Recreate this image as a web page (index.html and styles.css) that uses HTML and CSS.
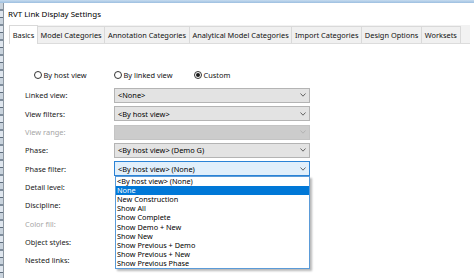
FILE: index.html
```html
<!DOCTYPE html>
<html>
<head>
<meta charset="utf-8">
<link rel="stylesheet" href="styles.css">
</head>
<body>
<div class="screen">
  <div class="topband"></div>
  <div class="main">
    <div class="side"></div>
    <div class="dialog">
      <div class="titlebar">RVT Link Display Settings</div>
      <div class="tabstrip">
        <div class="tab active">Basics</div>
        <div class="tab">Model Categories</div>
        <div class="tab">Annotation Categories</div>
        <div class="tab">Analytical Model Categories</div>
        <div class="tab">Import Categories</div>
        <div class="tab">Design Options</div>
        <div class="tab">Worksets</div>
      </div>
      <div class="content">
        <div class="radios">
          <div class="radio"><span class="circle"></span><span>By host view</span></div>
          <div class="radio"><span class="circle"></span><span>By linked view</span></div>
          <div class="radio"><span class="circle checked"></span><span>Custom</span></div>
        </div>
        <div class="form">
          <div class="label">Linked view:</div>
          <div class="cell"><div class="combo"><span>&lt;None&gt;</span><svg class="chev" width="6" height="4" viewBox="0 0 6 4"><polyline points="0.5,0.5 3,3.2 5.5,0.5"/></svg></div></div>

          <div class="label">View filters:</div>
          <div class="cell"><div class="combo"><span>&lt;By host view&gt;</span><svg class="chev" width="6" height="4" viewBox="0 0 6 4"><polyline points="0.5,0.5 3,3.2 5.5,0.5"/></svg></div></div>

          <div class="label disabled">View range:</div>
          <div class="cell"><div class="combo off"><span></span><svg class="chev" width="6" height="4" viewBox="0 0 6 4"><polyline points="0.5,0.5 3,3.2 5.5,0.5"/></svg></div></div>

          <div class="label">Phase:</div>
          <div class="cell"><div class="combo"><span>&lt;By host view&gt; (Demo G)</span><svg class="chev" width="6" height="4" viewBox="0 0 6 4"><polyline points="0.5,0.5 3,3.2 5.5,0.5"/></svg></div></div>

          <div class="label">Phase filter:</div>
          <div class="cell">
            <div class="combo focus"><span>&lt;By host view&gt; (None)</span><svg class="chev" width="6" height="4" viewBox="0 0 6 4"><polyline points="0.5,0.5 3,3.2 5.5,0.5"/></svg></div>
            <div class="dropdown">
              <div class="item">&lt;By host view&gt; (None)</div>
              <div class="item sel">None</div>
              <div class="item">New Construction</div>
              <div class="item">Show All</div>
              <div class="item">Show Complete</div>
              <div class="item">Show Demo + New</div>
              <div class="item">Show New</div>
              <div class="item">Show Previous + Demo</div>
              <div class="item">Show Previous + New</div>
              <div class="item">Show Previous Phase</div>
            </div>
          </div>

          <div class="label">Detail level:</div>
          <div class="cell"></div>

          <div class="label">Discipline:</div>
          <div class="cell"></div>

          <div class="label disabled">Color fill:</div>
          <div class="cell"></div>

          <div class="label">Object styles:</div>
          <div class="cell"></div>

          <div class="label">Nested links:</div>
          <div class="cell"></div>
        </div>
      </div>
    </div>
  </div>
</div>
</body>
</html>
```

FILE: styles.css
```css
html, body {
  margin: 0;
  padding: 0;
  background: #ffffff;
}
body {
  width: 474px;
  height: 278px;
  overflow: hidden;
  font-family: "Noto Sans", "Open Sans", sans-serif;
  color: #111;
}
.screen {
  display: flex;
  flex-direction: column;
  height: 278px;
}
.topband {
  height: 3px;
  background: linear-gradient(#c6dbef, #9dbfe0);
  flex: none;
}
.main {
  flex: 1;
  display: flex;
}
.side {
  width: 3px;
  flex: none;
  background: repeating-linear-gradient(180deg, #c9d3dd 0 6px, #7f8d9c 6px 8px, #dfe6ee 8px 14px, #5f6e7e 14px 15px);
}
.dialog {
  flex: 1;
  border-left: 1px solid #8c96a0;
  background: #fff;
  display: flex;
  flex-direction: column;
}
.titlebar {
  height: 22px;
  display: flex;
  align-items: center;
  padding-left: 4px;
  font-size: 7.95px;
  color: #000;
}
.tabstrip {
  height: 19px;
  margin-left: 5px;
  margin-right: 4px;
  display: flex;
  align-items: flex-end;
  background: #f2f2f2;
  border-bottom: 1px solid #dcdcdc;
  box-sizing: border-box;
}
.tab {
  height: 17px;
  box-sizing: border-box;
  display: flex;
  align-items: center;
  padding: 0 2.7px;
  font-size: 7.4px;
  color: #111;
  background: #f0f0f0;
  border: 1px solid #d9d9d9;
  border-left: none;
  border-bottom: none;
}
.tab:first-child {
  border-left: 1px solid #d9d9d9;
}
.tab.active {
  height: 19px;
  background: #ffffff;
  margin-bottom: -1px;
}
.content {
  padding-top: 25px;
}
.radios {
  display: grid;
  grid-template-columns: 80px 80px auto;
  height: 12px;
  align-items: center;
  padding-left: 30px;
  font-size: 7.4px;
}
.radio {
  display: flex;
  align-items: center;
  gap: 1.5px;
}
.circle {
  width: 8px;
  height: 8px;
  box-sizing: border-box;
  border: 1px solid #333;
  border-radius: 50%;
  background: #fff;
  display: flex;
  align-items: center;
  justify-content: center;
}
.circle.checked::after {
  content: "";
  width: 4px;
  height: 4px;
  border-radius: 50%;
  background: #1a1a1a;
}
.form {
  margin-top: 5.3px;
  padding-left: 21px;
  display: grid;
  grid-template-columns: 89px 196px;
  grid-auto-rows: 18.33px;
  align-items: center;
  font-size: 7.4px;
}
.label {
  color: #1a1a1a;
}
.label.disabled {
  color: #a6a6a6;
}
.cell {
  position: relative;
  height: 15px;
}
.combo {
  height: 15px;
  box-sizing: border-box;
  border: 1px solid #b4b4b4;
  background: #e3e3e3;
  display: flex;
  align-items: center;
  justify-content: space-between;
  padding: 0 3px 0 3px;
  color: #000;
}
.combo.off {
  background: #cccccc;
  border-color: #c4c4c4;
}
.combo.off .chev polyline {
  stroke: #b0b0b0;
}
.combo.focus {
  background: #e1effb;
  border-color: #2b83d6;
}
.chev {
  flex: none;
}
.chev polyline {
  fill: none;
  stroke: #555;
  stroke-width: 0.9;
}
.dropdown {
  position: absolute;
  top: 15px;
  left: 1px;
  width: 195px;
  box-sizing: border-box;
  border: 1px solid #5b9bd8;
  background: #fff;
  box-shadow: 2px 2px 2px rgba(0, 0, 0, 0.28);
  z-index: 2;
}
.item {
  height: 9.05px;
  line-height: 9.05px;
  padding-left: 1px;
  font-size: 7.3px;
  color: #000;
  white-space: nowrap;
}
.item.sel {
  background: #0078d7;
  color: #fff;
}
```
